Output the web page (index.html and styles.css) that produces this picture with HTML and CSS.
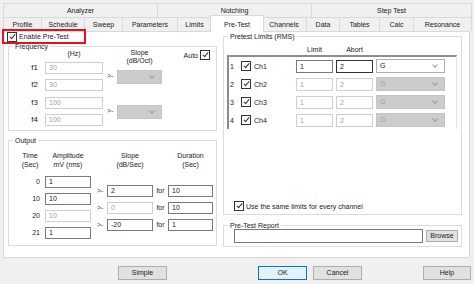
FILE: index.html
```html
<!DOCTYPE html>
<html lang="en">
<head>
    <meta charset="UTF-8">
    <title>Pre-Test</title>
    <link rel="stylesheet" href="styles.css">
</head>
<body>

    <!-- Tab strip -->
    <div class="tabs">
        <div class="tab-row groups">
            <div class="tab">Analyzer</div>
            <div class="tab">Notching</div>
            <div class="tab">Step Test</div>
        </div>
        <div class="tab-row pages">
            <div class="tab">Profile</div>
            <div class="tab">Schedule</div>
            <div class="tab">Sweep</div>
            <div class="tab">Parameters</div>
            <div class="tab">Limits</div>
            <div class="tab active">Pre-Test</div>
            <div class="tab">Channels</div>
            <div class="tab">Data</div>
            <div class="tab">Tables</div>
            <div class="tab">Calc</div>
            <div class="tab">Resonance</div>
        </div>
    </div>

    <div class="page">
        <div class="col">
            <label class="check enable"><span class="cb"></span>Enable Pre-Test</label>

            <!-- Frequency -->
            <fieldset class="group freq">
                <legend>Frequency</legend>
                <label class="check auto">Auto <span class="cb"></span></label>
                <div class="freq-grid">
                    <div class="head hz">(Hz)</div>
                    <div class="head slope">Slope<br>(dB/Oct)</div>

                    <div class="lbl f1">f1</div>
                    <div class="field off f1">30</div>
                    <div class="arrow a1">&gt;-</div>
                    <div class="select s1"></div>

                    <div class="lbl f2">f2</div>
                    <div class="field off f2">30</div>

                    <div class="lbl f3">f3</div>
                    <div class="field off f3">100</div>
                    <div class="arrow a2">&gt;-</div>
                    <div class="select s2"></div>

                    <div class="lbl f4">f4</div>
                    <div class="field off f4">100</div>
                </div>
            </fieldset>

            <!-- Output -->
            <fieldset class="group output">
                <legend>Output</legend>
                <div class="out-grid">
                    <div class="head c1">Time<br>(Sec)</div>
                    <div class="head c2">Amplitude<br>mV (rms)</div>
                    <div class="head c4">Slope<br>(dB/Sec)</div>
                    <div class="head c6">Duration<br>(Sec)</div>

                    <div class="lbl r0">0</div>
                    <div class="field amp r0">1</div>
                    <div class="lbl r1">10</div>
                    <div class="field amp r1">10</div>
                    <div class="lbl r2">20</div>
                    <div class="field amp off r2">10</div>
                    <div class="lbl r3">21</div>
                    <div class="field amp r3">1</div>

                    <div class="arrow s0">&gt;-</div>
                    <div class="field rate s0">2</div>
                    <div class="for s0">for</div>
                    <div class="field dur s0">10</div>

                    <div class="arrow s1">&gt;-</div>
                    <div class="field rate off s1">0</div>
                    <div class="for s1">for</div>
                    <div class="field dur s1">10</div>

                    <div class="arrow s2">&gt;-</div>
                    <div class="field rate s2">-20</div>
                    <div class="for s2">for</div>
                    <div class="field dur s2">1</div>
                </div>
            </fieldset>
        </div>

        <div class="col">
            <!-- Pretest limits -->
            <fieldset class="group limits">
                <legend>Pretest Limits (RMS)</legend>
                <div class="limit-head">
                    <div class="h-limit">Limit</div>
                    <div>Abort</div>
                </div>
                <div class="limit-table">
                    <div class="num">1</div>
                    <div class="name"><span class="cb"></span>Ch1</div>
                    <div class="field small">1</div>
                    <div class="field small focus">2</div>
                    <div class="select unit on">G</div>

                    <div class="num">2</div>
                    <div class="name"><span class="cb"></span>Ch2</div>
                    <div class="field small off">1</div>
                    <div class="field small off">2</div>
                    <div class="select unit">G</div>

                    <div class="num">3</div>
                    <div class="name"><span class="cb"></span>Ch3</div>
                    <div class="field small off">1</div>
                    <div class="field small off">2</div>
                    <div class="select unit">G</div>

                    <div class="num">4</div>
                    <div class="name"><span class="cb"></span>Ch4</div>
                    <div class="field small off">1</div>
                    <div class="field small off">2</div>
                    <div class="select unit">G</div>
                </div>
                <label class="check same"><span class="cb"></span>Use the same limits for every channel</label>
            </fieldset>

            <!-- Report -->
            <fieldset class="group report">
                <legend>Pre-Test Report</legend>
                <div class="report-row">
                    <div class="field path"></div>
                    <div class="btn browse">Browse</div>
                </div>
            </fieldset>
        </div>
    </div>

    <div class="buttons">
        <div class="btn simple">Simple</div>
        <div class="btn ok">OK</div>
        <div class="btn cancel">Cancel</div>
        <div class="btn help">Help</div>
    </div>

</body>
</html>
```

FILE: styles.css
```css
* {
    box-sizing: border-box;
}

body {
    margin: 0;
    width: 474px;
    height: 284px;
    overflow: hidden;
    background-color: #f0f0f0;
    font-family: "Liberation Sans", Arial, sans-serif;
    font-size: 7px;
    color: #1a1a1a;
}

/* Tab strip */
.tabs {
    padding: 3px 2px 0 3px;
}

.tab-row {
    display: grid;
    height: 14px;
}

.tab-row.groups {
    grid-template-columns: 155px 154px 160px;
}

.tab-row.pages {
    grid-template-columns: 39px 43px 38px 55px 34px 50px 45px 33px 40px 34px 58px;
}

.tab {
    border-top: 1px solid #d9d9d9;
    border-right: 1px solid #d9d9d9;
    line-height: 13px;
    text-align: center;
    white-space: nowrap;
}

.tab:first-child {
    border-left: 1px solid #d9d9d9;
}

.tab.active {
    position: relative;
    z-index: 1;
    margin: -2px -2px -1px;
    padding-top: 2px;
    background-color: #fff;
    border-left: 1px solid #d9d9d9;
}

/* Tab page */
.page {
    margin-left: 3px;
    width: 467px;
    height: 227px;
    background-color: #fff;
    border: 1px solid #d9d9d9;
    padding-left: 4px;
    display: grid;
    grid-template-columns: 209px 239px;
    column-gap: 6px;
    align-items: start;
}

.col {
    display: flex;
    flex-direction: column;
}

.group {
    position: relative;
    margin: 0;
    padding: 0;
    min-width: 0;
    border: 1px solid #dcdcdc;
}

legend {
    margin-left: 4px;
    padding: 0 2px;
    line-height: 9px;
}

/* Checkboxes */
.check {
    display: flex;
    align-items: center;
    white-space: nowrap;
}

.cb {
    position: relative;
    flex: none;
    display: inline-block;
    width: 10px;
    height: 10px;
    border: 1px solid #333;
    background-color: #fff;
}

.cb::after {
    content: "";
    position: absolute;
    left: 3px;
    top: 0;
    width: 2px;
    height: 5px;
    border-right: 1px solid #333;
    border-bottom: 1px solid #333;
    transform: rotate(40deg);
}

.enable {
    margin: -3px 0 0 -6px;
    width: 84px;
    height: 15px;
    padding-left: 3px;
    border: 2px solid #e81123;
    gap: 2px;
}

.auto {
    position: absolute;
    top: -1px;
    right: 6px;
    gap: 2px;
    padding-left: 2px;
    background-color: #fff;
}

/* Inputs */
.field {
    height: 12px;
    border: 1px solid #7a7a7a;
    background-color: #fff;
    padding-left: 3px;
    line-height: 10px;
    white-space: nowrap;
}

.field.off {
    border-color: #cfcfcf;
    color: #a0a0a0;
}

.field.focus {
    border-color: #333;
}

.select {
    position: relative;
    height: 14px;
    background-color: #cccccc;
    border: 1px solid #c4c4c4;
    padding-left: 3px;
    line-height: 12px;
    color: #a0a0a0;
}

.select::after {
    content: "";
    position: absolute;
    right: 7px;
    top: 3px;
    width: 3px;
    height: 3px;
    border-right: 1px solid #999;
    border-bottom: 1px solid #999;
    transform: rotate(45deg);
}

.select.on {
    background-color: #fff;
    border-color: #adadad;
    color: #1a1a1a;
}

.arrow {
    color: #444;
    padding-left: 6px;
}

.head {
    line-height: 8px;
    text-align: center;
}

.lbl {
    text-align: right;
}

/* Frequency */
.freq {
    margin-top: -2px;
    padding-bottom: 4px;
}

.freq-grid {
    margin-top: -2px;
    display: grid;
    grid-template-columns: 36px 58px 14px 45px;
    grid-template-rows: 13px 17px 18px 17px 12px;
    align-items: start;
}

.freq-grid .head {
    grid-row: 1;
}

.freq-grid .hz {
    grid-column: 2;
    margin-top: 1px;
}

.freq-grid .slope {
    grid-column: 4;
}

.freq-grid .lbl {
    grid-column: 1;
    padding-right: 7px;
    line-height: 12px;
    font-size: 8px;
}

.freq-grid .field {
    grid-column: 2;
}

.freq-grid .f1 { grid-row: 2; }
.freq-grid .f2 { grid-row: 3; }
.freq-grid .f3 { grid-row: 4; }
.freq-grid .f4 { grid-row: 5; }

.freq-grid .arrow {
    grid-column: 3;
    padding-left: 4px;
    margin-top: 10px;
}

.freq-grid .select {
    grid-column: 4;
    margin-top: 8px;
}

.freq-grid .a1, .freq-grid .s1 {
    grid-row: 2 / 4;
}

.freq-grid .a2, .freq-grid .s2 {
    grid-row: 4 / 6;
}

/* Output */
.output {
    margin-top: 5px;
    padding-bottom: 1px;
}

.out-grid {
    display: grid;
    grid-template-columns: 36px 46px 16px 46px 15px 45px;
    grid-template-rows: 31px repeat(8, 8.5px);
    align-items: start;
}

.out-grid .head {
    grid-row: 1;
    padding-top: 6px;
    line-height: 9px;
}

.out-grid .c1 { grid-column: 1; padding-left: 6px; }
.out-grid .c2 { grid-column: 2; }
.out-grid .c4 { grid-column: 4; }
.out-grid .c6 { grid-column: 6; }

.out-grid .lbl {
    grid-column: 1;
    padding-right: 5px;
    line-height: 12px;
}

.out-grid .amp { grid-column: 2; }
.out-grid .arrow { grid-column: 3; line-height: 12px; }
.out-grid .rate { grid-column: 4; }
.out-grid .for { grid-column: 5; line-height: 12px; text-align: center; }
.out-grid .dur { grid-column: 6; }

.out-grid .r0 { grid-row: 2 / span 2; }
.out-grid .r1 { grid-row: 4 / span 2; }
.out-grid .r2 { grid-row: 6 / span 2; }
.out-grid .r3 { grid-row: 8 / span 2; }
.out-grid .s0 { grid-row: 3 / span 2; }
.out-grid .s1 { grid-row: 5 / span 2; }
.out-grid .s2 { grid-row: 7 / span 2; }

/* Pretest limits */
.limits {
    padding-bottom: 3px;
}

.limit-head {
    display: grid;
    grid-template-columns: 37px 3px 37px;
    margin-left: 72px;
    height: 14px;
    padding-top: 4px;
    line-height: 9px;
}

.limit-head div {
    text-align: center;
}

.limit-head .h-limit {
    grid-column: 1;
}

.limit-head div:last-child {
    grid-column: 3;
}

.limit-table {
    margin-left: 3px;
    width: 230px;
    display: grid;
    grid-template-columns: 12px 55px 40px 40px 69px;
    grid-auto-rows: 18px;
    align-items: center;
    border-top: 2px solid #8c8c8c;
    border-left: 2px solid #8c8c8c;
    border-right: 1px solid #e6e6e6;
}

.num {
    padding-left: 1px;
}

.name {
    display: flex;
    align-items: center;
    gap: 3px;
}

.field.small {
    width: 37px;
    height: 13px;
    line-height: 11px;
}

.select.unit {
    height: 14px;
}

.same {
    margin: 72px 0 0 10px;
    gap: 2px;
    height: 10px;
}

/* Report */
.report {
    margin-top: 6px;
    padding-bottom: 3px;
}

.report-row {
    display: flex;
    align-items: center;
    margin-top: -1px;
    padding-left: 10px;
}

.field.path {
    width: 189px;
    height: 14px;
}

/* Buttons */
.btn {
    height: 14px;
    border: 1px solid #adadad;
    background-color: #e1e1e1;
    text-align: center;
    line-height: 12px;
}

.browse {
    width: 32px;
    height: 12px;
    line-height: 10px;
    margin-left: 3px;
}

.buttons {
    display: flex;
    padding-top: 8px;
}

.simple { margin-left: 118px; width: 49px; }
.ok { margin-left: 91px; width: 49px; background-color: #e5f1fb; border-color: #0078d7; }
.cancel { margin-left: 6px; width: 49px; }
.help { margin-left: 61px; width: 48px; }
```
